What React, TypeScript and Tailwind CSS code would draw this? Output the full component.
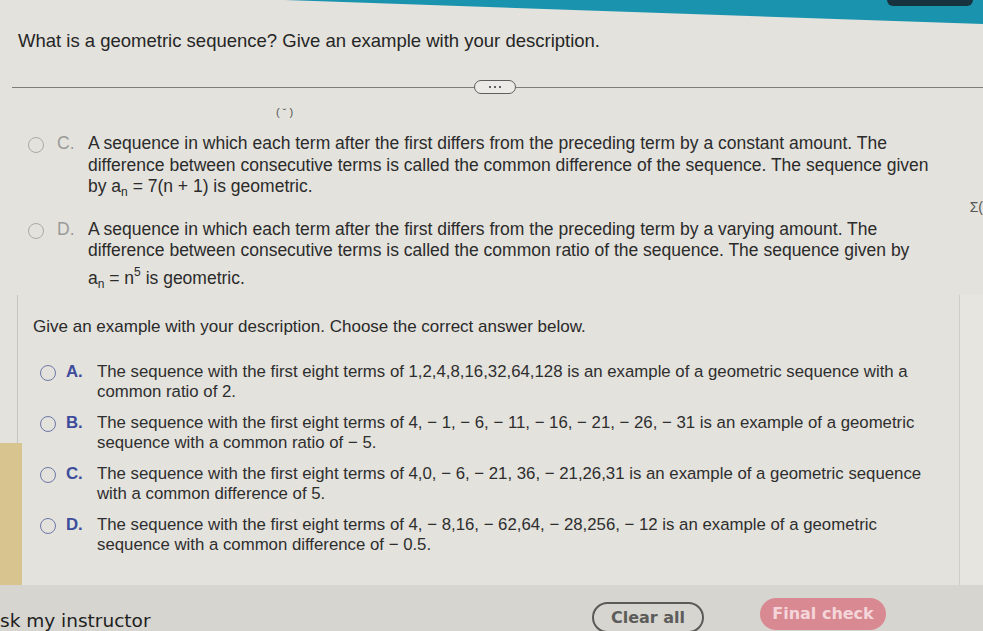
import React from 'react';

// ── Small radio circle ─────────────────────────────────────────────────────────
function Radio({ faded }: { faded?: boolean }) {
  return (
    <span
      className={
        'inline-block w-[16px] h-[16px] rounded-full border-[1.5px] shrink-0 ' +
        (faded ? 'border-[#a9a9a7]' : 'border-[#6f77a6]')
      }
    />
  );
}

function Sub({ children }: { children: React.ReactNode }) {
  return <sub className="text-[12px] relative top-[4px]">{children}</sub>;
}

// ── Upper (partially scrolled) answer choices ─────────────────────────────────
function UpperChoice({ letter, lines, top }: { letter: string; lines: React.ReactNode[]; top: string }) {
  return (
    <div className={'flex items-start ' + top}>
      <div className="w-[57px] pl-[28px] pt-[3px]">
        <Radio faded />
      </div>
      <div className="w-[31px] text-[17.5px] leading-[21.5px] text-[#9a9a98]">{letter}</div>
      <div className="text-[17.5px] leading-[21.5px] text-[#2b2b2b] whitespace-nowrap">
        {lines.map((l, i) => (
          <div key={i}>{l}</div>
        ))}
      </div>
    </div>
  );
}

// ── Lower answer choices ──────────────────────────────────────────────────────
function LowerChoice({ letter, lines }: { letter: string; lines: string[] }) {
  return (
    <div className="flex items-start">
      <div className="w-[66px] pl-[40px] pt-[2px]">
        <Radio />
      </div>
      <div className="w-[31px] text-[16.8px] leading-[20px] font-bold text-[#3d4c9c]">{letter}</div>
      <div className="text-[16.8px] leading-[20px] text-[#2e2e2e] whitespace-nowrap">
        {lines.map((l, i) => (
          <div key={i}>{l}</div>
        ))}
      </div>
    </div>
  );
}

export default function App() {
  return (
    <div className="w-[983px] h-[631px] overflow-hidden bg-[#e3e2dd] font-['Liberation_Sans',Arial,sans-serif] flex flex-col relative">
      {/* teal header wedge */}
      <div className="h-[24px] flex shrink-0">
        <div className="flex-1 bg-[#1a93ae] [clip-path:polygon(29%_0,100%_0,100%_100%)]" />
      </div>
      <div className="absolute right-[10px] top-0 w-[86px] h-[6px] rounded-b-[6px] bg-[#17333f]" />

      {/* question */}
      <div className="pl-[18px] pt-[6px] text-[18.5px] leading-[22px] text-[#262626]">
        What is a geometric sequence? Give an example with your description.
      </div>

      {/* divider with more button */}
      <div className="flex items-center mt-[28px] pl-[12px]">
        <div className="w-[462px] h-px bg-[#7d7d7b]" />
        <div className="w-[42px] h-[14px] rounded-full border-[1.5px] border-[#5e5e5c] flex items-center justify-center gap-[3px] bg-[#ebeae6]">
          <span className="w-[2px] h-[2px] rounded-full bg-[#333]" />
          <span className="w-[2px] h-[2px] rounded-full bg-[#333]" />
          <span className="w-[2px] h-[2px] rounded-full bg-[#333]" />
        </div>
        <div className="flex-1 h-px bg-[#7d7d7b]" />
      </div>

      <div className="pl-[276px] mt-[12px] text-[11px] leading-[12px] text-[#555]">( ˘ )</div>

      <UpperChoice
        top="mt-[15px]"
        letter="C."
        lines={[
          'A sequence in which each term after the first differs from the preceding term by a constant amount. The',
          'difference between consecutive terms is called the common difference of the sequence. The sequence given',
          <>
            by a<Sub>n</Sub> = 7(n + 1) is geometric.
          </>,
        ]}
      />

      <UpperChoice
        top="mt-[21px]"
        letter="D."
        lines={[
          'A sequence in which each term after the first differs from the preceding term by a varying amount. The',
          'difference between consecutive terms is called the common ratio of the sequence. The sequence given by',
          <span className="inline-block pt-[6px]">
            a<Sub>n</Sub> = n<sup className="text-[12px] relative -top-[8px]">5</sup> is geometric.
          </span>,
        ]}
      />

      {/* second part, with left border line */}
      <div className="flex flex-1 mt-[6px]">
        <div className="w-[22px] flex flex-col shrink-0">
          <div className="flex-1 border-r border-[#c4c3bf] mr-[4px]" />
          <div className="h-[142px] bg-[#d8c48f]" />
        </div>
        <div className="flex-1 flex flex-col">
          <div className="pl-[11px] pt-[22px] text-[17px] leading-[20px] text-[#2a2a2a]">
            Give an example with your description. Choose the correct answer below.
          </div>
          <div className="flex flex-col gap-[11px] mt-[25px] -ml-[22px]">
            <LowerChoice
              letter="A."
              lines={[
                'The sequence with the first eight terms of 1,2,4,8,16,32,64,128 is an example of a geometric sequence with a',
                'common ratio of 2.',
              ]}
            />
            <LowerChoice
              letter="B."
              lines={[
                'The sequence with the first eight terms of 4, − 1, − 6, − 11,  − 16, − 21, − 26, − 31 is an example of a geometric',
                'sequence with a common ratio of  − 5.',
              ]}
            />
            <LowerChoice
              letter="C."
              lines={[
                'The sequence with the first eight terms of 4,0, − 6, − 21, 36, − 21,26,31 is an example of a geometric sequence',
                'with a common difference of 5.',
              ]}
            />
            <LowerChoice
              letter="D."
              lines={[
                'The sequence with the first eight terms of 4, − 8,16, − 62,64, − 28,256, − 12 is an example of a geometric',
                'sequence with a common difference of  − 0.5.',
              ]}
            />
          </div>
        </div>
        <div className="w-[24px] border-l border-[#cfcec9] bg-[#e6e5e0] shrink-0" />
      </div>

      {/* footer */}
      <div className="h-[46px] shrink-0 bg-[#d6d5cf] flex items-end relative">
        <div className="text-[18.5px] leading-[20px] text-[#1e1e1e] font-['DejaVu_Sans',sans-serif]">
          sk my instructor
        </div>
        <div className="flex-1" />
        <div className="flex items-end gap-[56px] mr-[97px]">
          <div className="w-[112px] h-[31px] rounded-full border-2 border-[#5a5a58] flex items-center justify-center text-[16px] font-bold text-[#5c5c5a] font-['DejaVu_Sans',sans-serif] mb-[-2px]">
            Clear all
          </div>
          <div className="w-[126px] h-[32px] rounded-full bg-[#d98992] flex items-center justify-center text-[16px] font-bold text-[#f4d6da] font-['DejaVu_Sans',sans-serif] mb-[1px]">
            Final check
          </div>
        </div>
      </div>

      {/* right panel glyph */}
      <div className="absolute right-0 top-[200px] text-[14px] text-[#555] leading-none">Σ(</div>
    </div>
  );
}
